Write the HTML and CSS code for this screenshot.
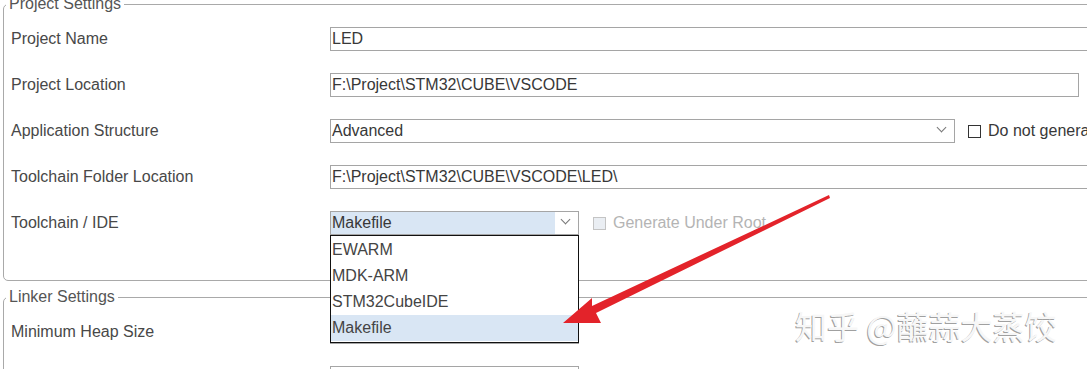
FILE: index.html
```html
<!DOCTYPE html>
<html lang="en">

<head>
  <meta charset="UTF-8" />
  <meta name="viewport" content="width=device-width, initial-scale=1" />
  <title>Project Manager</title>
  <link rel="stylesheet" href="styles.css">
</head>

<body>
  <div class="page">
    <fieldset class="group">
      <legend>Project Settings</legend>
      <div class="rows">
        <div class="row">
          <label>Project Name</label>
          <div class="field">LED</div>
        </div>
        <div class="row">
          <label>Project Location</label>
          <div class="field location">F:\Project\STM32\CUBE\VSCODE</div>
        </div>
        <div class="row">
          <label>Application Structure</label>
          <div class="inline">
            <div class="select structure">
              <span class="value">Advanced</span>
              <span class="chevron"></span>
            </div>
            <span class="check"></span>
            <span class="check-text">Do not generate the main()</span>
          </div>
        </div>
        <div class="row">
          <label>Toolchain Folder Location</label>
          <div class="field">F:\Project\STM32\CUBE\VSCODE\LED\</div>
        </div>
        <div class="row">
          <label>Toolchain / IDE</label>
          <div class="inline">
            <div class="select toolchain">
              <span class="value chosen">Makefile</span>
              <span class="chevron"></span>
              <ul class="dropdown">
                <li>EWARM</li>
                <li>MDK-ARM</li>
                <li>STM32CubeIDE</li>
                <li class="active">Makefile</li>
              </ul>
            </div>
            <span class="check disabled"></span>
            <span class="check-text disabled">Generate Under Root</span>
          </div>
        </div>
      </div>
    </fieldset>

    <fieldset class="group linker">
      <legend>Linker Settings</legend>
      <div class="rows">
        <div class="row">
          <label>Minimum Heap Size</label>
          <div class="field small"></div>
        </div>
        <div class="row">
          <label>Minimum Stack Size</label>
          <div class="field small"></div>
        </div>
      </div>
    </fieldset>

    <div class="watermark">知乎 @蘸蒜大蒸饺</div>

    <svg class="arrow" width="1087" height="369" viewBox="0 0 1087 369">
      <polygon fill="#e3232a"
        points="829,195 830,198 596,313 601,323 563,323 592,298 592,306" />
    </svg>
  </div>
</body>

</html>
```

FILE: styles.css
```css
* {
  box-sizing: border-box;
  margin: 0;
  padding: 0;
}

body {
  background: #fff;
  color: #444;
  font-family: 'Liberation Sans', Arial, sans-serif;
  font-size: 16px;
  overflow: hidden;
}

.page {
  position: relative;
  width: 1087px;
  height: 369px;
  overflow: hidden;
}

.group {
  width: 1160px;
  margin: -5px 0 0 3px;
  padding: 14px 7px 45px 7px;
  border: 1px solid #a9a9a9;
  border-radius: 5px;
}

.group legend {
  margin-left: -5px;
  padding: 0 3px;
  line-height: 18px;
  color: #555;
}

.linker {
  margin-top: 7px;
}

.rows {
  display: flex;
  flex-direction: column;
  gap: 22px;
}

.row {
  display: grid;
  grid-template-columns: 319px 1fr;
  align-items: center;
  height: 24px;
}

.row label {
  color: #484848;
}

.field {
  height: 24px;
  padding-left: 1px;
  line-height: 22px;
  border: 1px solid #a5a5a5;
  color: #383838;
  white-space: nowrap;
}

.location {
  width: 749px;
}

.small {
  width: 249px;
}

.inline {
  display: flex;
  align-items: center;
}

.select {
  position: relative;
  display: flex;
  height: 24px;
  border: 1px solid #a5a5a5;
  background: #fff;
  color: #383838;
}

.structure {
  width: 625px;
}

.toolchain {
  width: 249px;
}

.select .value {
  flex: 1;
  padding-left: 1px;
  line-height: 22px;
}

.select .chosen {
  background: #d9e6f4;
}

.chevron {
  position: relative;
  width: 23px;
}

.chevron::after {
  content: '';
  position: absolute;
  left: 7px;
  top: 4px;
  width: 6px;
  height: 6px;
  border-right: 1px solid #777;
  border-bottom: 1px solid #777;
  transform: rotate(45deg);
}

.check {
  width: 13px;
  height: 13px;
  margin: 0 7px 0 13px;
  border: 1px solid #333;
  background: #fff;
}

.check.disabled {
  margin-left: 14px;
  border-color: #c4c4c4;
  background: #eaeef3;
}

.check-text {
  color: #383838;
  white-space: nowrap;
}

.check-text.disabled {
  color: #b4b4b4;
}

.dropdown {
  position: absolute;
  top: 23px;
  left: -1px;
  width: 249px;
  list-style: none;
  background: #fff;
  border: 1px solid #111;
  padding: 1px 0;
  z-index: 2;
}

.dropdown li {
  height: 26px;
  padding-left: 1px;
  line-height: 26px;
  color: #444;
}

.dropdown .active {
  background: #d9e6f4;
}

.watermark {
  position: absolute;
  left: 795px;
  top: 306px;
  font-family: 'Noto Sans CJK SC', sans-serif;
  font-size: 32px;
  line-height: 38px;
  color: #f7f7f7;
  text-shadow: -1px 1px 0 #a0a0a0;
  white-space: nowrap;
}

.arrow {
  position: absolute;
  left: 0;
  top: 0;
  z-index: 3;
  pointer-events: none;
}
```
